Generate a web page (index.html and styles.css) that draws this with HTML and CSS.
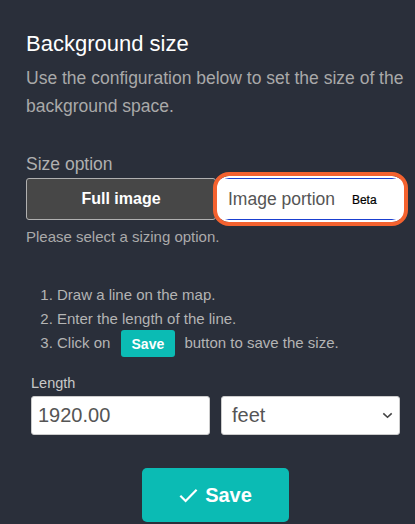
FILE: index.html
```html
<!DOCTYPE html>
<html>
<head>
<meta charset="utf-8">
<link rel="stylesheet" href="styles.css">
</head>
<body>
<div class="panel">
  <h1 class="title">Background size</h1>
  <p class="desc">Use the configuration below to set the size of the background space.</p>
  <div class="label">Size option</div>
  <div class="toggle">
    <button class="opt opt-full">Full image</button>
    <button class="opt opt-portion">Image portion <span class="beta">Beta</span></button>
  </div>
  <div class="help">Please select a sizing option.</div>
  <ol class="steps">
    <li>Draw a line on the map.</li>
    <li>Enter the length of the line.</li>
    <li>Click on <span class="badge">Save</span> button to save the size.</li>
  </ol>
  <div class="field">
    <div class="field-label">Length</div>
    <div class="inputs">
      <div class="input">1920.00</div>
      <div class="select"><span>feet</span>
        <svg class="chev" width="11" height="7" viewBox="0 0 12 8"><path d="M1.2 1.5 L6 6 L10.8 1.5" fill="none" stroke="#444" stroke-width="1.8"/></svg>
      </div>
    </div>
    <div class="actions">
      <button class="save">
        <svg width="19" height="15" viewBox="0 0 19 15"><path d="M1.3 7.8 L6.6 13 L17.6 1.8" fill="none" stroke="#fff" stroke-width="2.2"/></svg>
        Save
      </button>
    </div>
  </div>
</div>
</body>
</html>
```

FILE: styles.css
```css
html, body {
  margin: 0;
  padding: 0;
  background: #2a2f3a;
  font-family: "Liberation Sans", Arial, sans-serif;
}
.panel {
  padding: 31px 11px 0 26px;
  height: 524px;
  box-sizing: border-box;
  overflow: hidden;
}
.title {
  margin: 0;
  font-size: 22px;
  font-weight: normal;
  color: #fff;
  line-height: 26px;
}
.desc {
  margin: 7px 0 0 0;
  font-size: 17.5px;
  line-height: 28px;
  color: #a9a9a9;
}
.label {
  margin-top: 34px;
  font-size: 17.5px;
  line-height: 20px;
  color: #b0b0b0;
}
.toggle {
  display: flex;
  margin-top: 4px;
  width: 378px;
  height: 42px;
}
.opt {
  font-family: inherit;
  margin: 0;
  height: 42px;
  box-sizing: border-box;
  cursor: pointer;
}
.opt-full {
  width: 190px;
  background: #474747;
  border: 1px solid #b0b0b0;
  border-radius: 3px;
  color: #fff;
  font-size: 16px;
  font-weight: bold;
  padding: 0;
}
.opt-portion {
  position: relative;
  width: 188px;
  background: #fff;
  border: none;
  border-top: 1px solid #1a3fd0;
  border-bottom: 1px solid #1a3fd0;
  color: #555;
  font-size: 17.5px;
  text-align: left;
  padding: 0 0 0 12px;
}
.opt-portion::after {
  content: "";
  position: absolute;
  top: -7px;
  bottom: -7px;
  left: -3px;
  right: -4px;
  border: 4px solid #f4622f;
  border-radius: 16px;
  box-shadow: inset 0 0 0 2px #fff;
  pointer-events: none;
}
.beta {
  font-size: 12px;
  color: #000;
  margin-left: 12px;
  vertical-align: 1px;
  -webkit-text-stroke: 0.2px #000;
}
.help {
  margin-top: 8px;
  font-size: 15px;
  line-height: 18px;
  color: #aaa;
}
.steps {
  margin: 37px 0 0 0;
  padding-left: 31px;
  font-size: 15px;
  color: #b4b4b4;
}
.steps li {
  line-height: 24px;
}
.badge {
  background: #0bbbb4;
  color: #fff;
  font-weight: bold;
  font-size: 14px;
  padding: 5.5px 11px;
  border-radius: 3px;
  margin: 0 5px 0 6px;
}
.field {
  margin-top: 20px;
  padding: 0 4px 0 5px;
}
.field-label {
  font-size: 14.5px;
  color: #c8c8c8;
  line-height: 17px;
}
.inputs {
  display: grid;
  grid-template-columns: 179px 179px;
  column-gap: 11px;
  margin-top: 4px;
}
.input, .select {
  height: 39px;
  box-sizing: border-box;
  background: #fff;
  border: 1px solid #ccc;
  border-radius: 3px;
  display: flex;
  align-items: center;
  color: #555;
  font-size: 20px;
}
.input {
  padding: 0 0 0 6px;
}
.select {
  padding: 0 6px 0 10px;
  justify-content: space-between;
}
.actions {
  display: flex;
  justify-content: center;
  margin-top: 33px;
}
.save {
  width: 147px;
  height: 54px;
  background: #0bbbb4;
  border: none;
  border-radius: 5px;
  color: #fff;
  font-family: inherit;
  font-weight: bold;
  font-size: 20px;
  display: flex;
  align-items: center;
  justify-content: center;
  gap: 7px;
  padding: 0;
}
```
